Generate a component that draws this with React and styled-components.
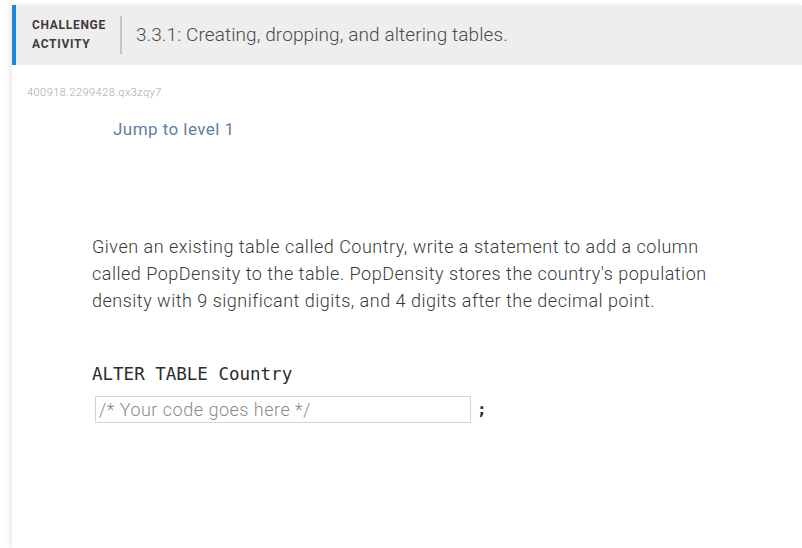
import React from "react";
import styled, { createGlobalStyle } from "styled-components";

const GlobalStyle = createGlobalStyle`
  html, body {
    margin: 0;
    padding: 0;
    background: #ffffff;
    overflow: hidden;
  }
  body {
    font-family: Roboto, "Liberation Sans", sans-serif;
  }
`;

function App() {
  return (
    <Pagina>
      <GlobalStyle />
      <Tarjeta>
        <Cabecera>
          <Etiqueta>
            Challenge
            <br />
            Activity
          </Etiqueta>
          <Separador />
          <Titulo>3.3.1: Creating, dropping, and altering tables.</Titulo>
        </Cabecera>
        <Cuerpo>
          <Codigo>400918.2299428.qx3zqy7</Codigo>
          <Salto>Jump to level 1</Salto>
          <Enunciado>
            Given an existing table called Country, write a statement to add a column
            called PopDensity to the table. PopDensity stores the country's population
            density with 9 significant digits, and 4 digits after the decimal point.
          </Enunciado>
          <Sentencia>ALTER TABLE Country</Sentencia>
          <FilaRespuesta>
            <Entrada placeholder="/* Your code goes here */" />
            <PuntoComa>;</PuntoComa>
          </FilaRespuesta>
        </Cuerpo>
      </Tarjeta>
    </Pagina>
  );
}

const Pagina = styled.div`
  padding: 5px 0 0 12px;
  height: 548px;
  box-sizing: border-box;
`;

const Tarjeta = styled.div`
  height: 100%;
  background: #ffffff;
  box-shadow: -2px 0 5px rgba(0, 0, 0, 0.1);
`;

const Cabecera = styled.div`
  display: flex;
  align-items: center;
  height: 60px;
  background: #eeeeee;
  border-left: 4px solid #1a87d6;
  padding-left: 16px;
`;

const Etiqueta = styled.div`
  font-size: 12px;
  font-weight: 700;
  letter-spacing: 0.7px;
  line-height: 19px;
  text-transform: uppercase;
  color: #3c3c3c;
  margin-top: -1px;
`;

const Separador = styled.div`
  width: 2px;
  height: 38px;
  background: #c4c4c4;
  margin: 0 14px 0 14px;
`;

const Titulo = styled.div`
  font-size: 19px;
  font-weight: 300;
  letter-spacing: 0.1px;
  color: #4a4a4a;
  margin-top: -2px;
`;

const Cuerpo = styled.div`
  padding: 20px 0 0 15px;
`;

const Codigo = styled.div`
  font-size: 11px;
  font-weight: 300;
  letter-spacing: 0.45px;
  color: #a8a8a8;
  line-height: 16px;
`;

const Salto = styled.div`
  margin: 17px 0 0 86px;
  font-size: 17px;
  letter-spacing: 0.45px;
  color: #5b7fa7;
  line-height: 22px;
`;

const Enunciado = styled.p`
  margin: 93px 0 0 65px;
  width: 625px;
  font-size: 18px;
  font-weight: 300;
  letter-spacing: 0.5px;
  line-height: 27px;
  color: #3a3a3a;
`;

const Sentencia = styled.div`
  margin: 49px 0 0 65px;
  font-family: "DejaVu Sans Mono", "Liberation Mono", monospace;
  font-size: 17.5px;
  color: #2b2b2b;
  line-height: 22px;
`;

const FilaRespuesta = styled.div`
  display: flex;
  align-items: center;
  margin: 11px 0 0 68px;
`;

const Entrada = styled.input`
  width: 376px;
  height: 27px;
  box-sizing: border-box;
  border: 1px solid #cfd6db;
  padding: 0 3px;
  font-family: Roboto, "Liberation Sans", sans-serif;
  font-size: 18px;
  font-weight: 300;
  letter-spacing: 0.5px;
  outline: none;
  &::placeholder {
    color: #8a8a8a;
  }
`;

const PuntoComa = styled.span`
  margin-left: 6px;
  font-family: "DejaVu Sans Mono", monospace;
  font-weight: 700;
  font-size: 16px;
  color: #2b2b2b;
`;

export default App;
